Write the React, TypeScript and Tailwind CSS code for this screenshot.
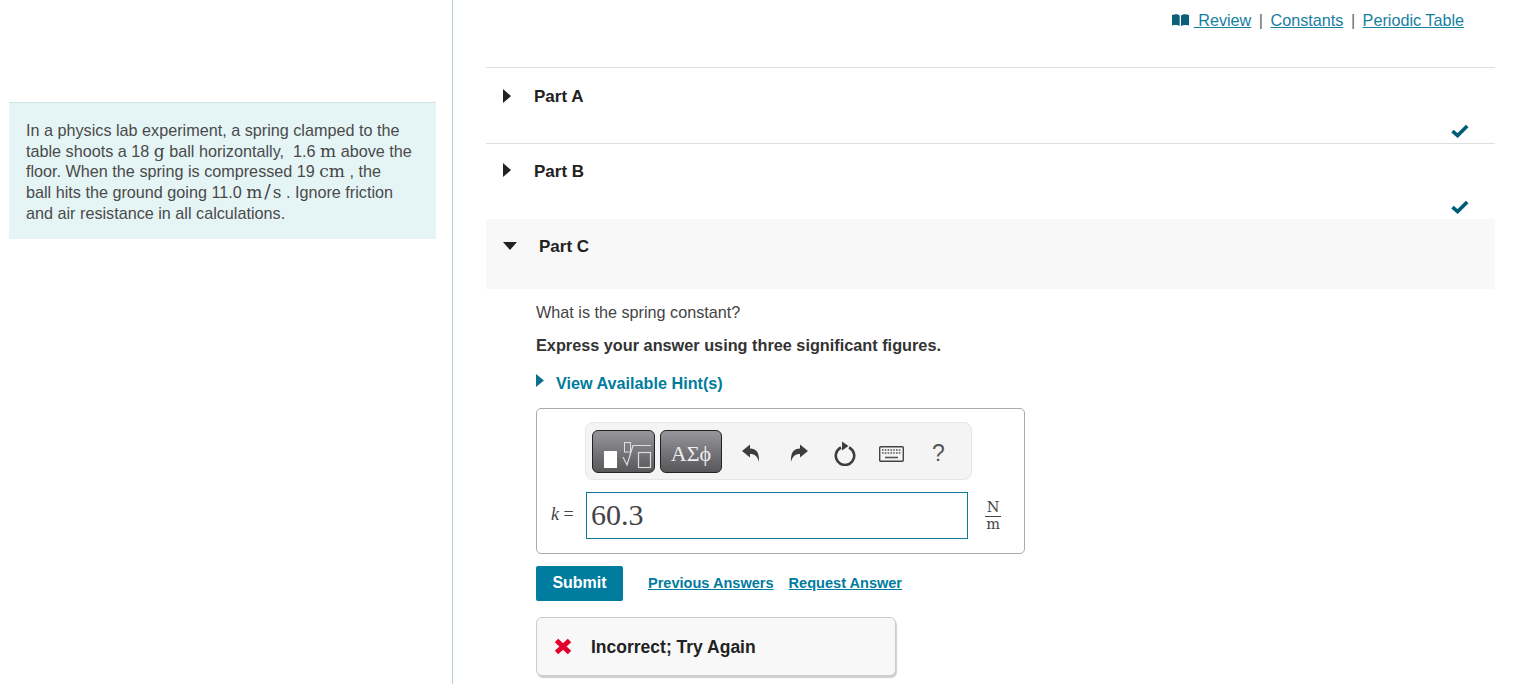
import React from "react";

const sans = "font-['Liberation_Sans',Arial,sans-serif]";
const serif = "font-['Liberation_Serif','Times_New_Roman',serif]";
const dejaSerif = "font-['DejaVu_Serif',serif]";

function M({ children }: { children: React.ReactNode }) {
  return <span className={`${dejaSerif} text-[17px] leading-[16px] text-[#444]`}>{children}</span>;
}

function Check() {
  return (
    <svg width="18" height="14" viewBox="0 0 18 14" className="block">
      <path d="M1.5 7.2 L6.6 11.6 L16.2 2" fill="none" stroke="#005c75" strokeWidth="3.6" />
    </svg>
  );
}

function RightTri({ color = "#222", h = 14, className = "" }: { color?: string; h?: number; className?: string }) {
  return (
    <svg width="8" height={h} viewBox={`0 0 8 ${h}`} className={`block ${className}`}>
      <path d={`M0 0 L8 ${h / 2} L0 ${h} Z`} fill={color} />
    </svg>
  );
}

function PartRow({ label, triClass, labelClass }: { label: string; triClass: string; labelClass: string }) {
  return (
    <div className="h-[76px] border-t border-[#dedede] flex flex-col">
      <div className="flex items-start pl-[17px] h-[49px]">
        <RightTri className={triClass} />
        <span className={`ml-[23px] text-[17px] leading-[20px] font-bold text-[#222] ${labelClass}`}>{label}</span>
      </div>
      <div className="flex justify-end pr-[26px] mt-[7px]">
        <Check />
      </div>
    </div>
  );
}

export default function App() {
  return (
    <div className={`${sans} flex h-[684px] overflow-hidden bg-white text-[#444]`}>
      <aside className="w-[453px] shrink-0 border-r border-[#b6d0e2] pt-[102px] pl-[9px] pr-[16px]">
        <div className="h-[137px] bg-[#e5f5f6] border-t border-[#d3e3e3] pl-[17px] pt-[17px] pr-[10px] text-[16.2px] leading-[20.6px] text-[#4a4a4a]">
          <div className="h-[20.6px] whitespace-nowrap">In a physics lab experiment, a spring clamped to the</div>
          <div className="h-[20.6px] whitespace-nowrap">table shoots a 18 <M>g</M> ball horizontally,&nbsp; 1.6 <M>m</M> above the</div>
          <div className="h-[20.6px] whitespace-nowrap">floor. When the spring is compressed 19 <M>cm</M> , the</div>
          <div className="h-[20.6px] whitespace-nowrap">ball hits the ground going 11.0 <M>m<span className="px-[2px] text-[19px]">/</span>s</M> . Ignore friction</div>
          <div className="h-[20.6px] whitespace-nowrap mt-[1px]">and air resistance in all calculations.</div>
        </div>
      </aside>

      <main className="flex-1 pl-[33px] pr-[30px]">
        <div className="h-[67px] flex justify-end pt-[11px] pr-[31px] text-[16.2px] leading-[18px] text-[#666]">
          <svg width="17" height="12" viewBox="0 0 17 12" className="mt-[3px] mr-[5px]">
            <path d="M0 1 C3 0 6 0 7.7 1.5 V12 C6 10.8 3 10.8 0 11.5 Z M9 1.5 C11 0 14 0 17 1 V11.5 C14 10.8 11 10.8 9 12 Z" fill="#0b5f78" />
          </svg>
          <a className="underline text-[#16809f] whitespace-pre"> Review</a>
          <span className="mx-[7.5px]">|</span>
          <a className="underline text-[#16809f]">Constants</a>
          <span className="mx-[7.5px]">|</span>
          <a className="underline text-[#16809f]">Periodic Table</a>
        </div>

        <PartRow label="Part A" triClass="mt-[21px]" labelClass="mt-[19px]" />
        <PartRow label="Part B" triClass="mt-[19px]" labelClass="mt-[18px]" />

        <div className="h-[70px] bg-[#f8f8f8] flex items-start pl-[17px] pt-[18px]">
          <svg width="14" height="8" viewBox="0 0 14 8" className="mt-[5px]">
            <path d="M0 0 H14 L7 8 Z" fill="#222" />
          </svg>
          <span className="ml-[22px] text-[17px] leading-[20px] font-bold text-[#222]">Part C</span>
        </div>

        <div className="pl-[50px]">
          <p className="mt-[14px] text-[16.2px] leading-[19px] text-[#444]">What is the spring constant?</p>
          <p className="mt-[14px] text-[16.28px] leading-[19px] font-bold text-[#333]">Express your answer using three significant figures.</p>
          <div className="mt-[18px] flex items-start h-[20px]">
            <RightTri color="#0b6f8f" h={13} className="mt-[1px]" />
            <span className="ml-[12px] text-[16.2px] leading-[20px] font-bold text-[#007c9e]">View Available Hint(s)</span>
          </div>

          <div className="mt-[15px] w-[489px] h-[146px] border border-[#aaaaaa] rounded-[5px] pt-[13px] pl-[48px]">
            <div className="w-[387px] h-[58px] bg-[#f4f4f4] border border-[#e6e6e6] rounded-[8px] flex items-center pl-[6px]">
              <div className="w-[63px] h-[43px] rounded-[6px] border border-[#222] bg-linear-to-b from-[#97969c] to-[#58585a]">
                <svg width="61" height="41" viewBox="0 0 61 41" className="block">
                  <rect x="11" y="20" width="13" height="17" fill="#fff" />
                  <rect x="31.5" y="11.5" width="6" height="9.5" fill="none" stroke="#ddd" strokeWidth="1" />
                  <path d="M30 26 L34 34 L40 14.5 H58" fill="none" stroke="#ddd" strokeWidth="1.2" />
                  <rect x="45.5" y="21.5" width="12" height="15" fill="none" stroke="#ddd" strokeWidth="1.2" />
                </svg>
              </div>
              <div className={`${serif} ml-[5px] w-[62px] h-[43px] rounded-[6px] border border-[#222] bg-linear-to-b from-[#97969c] to-[#58585a] flex items-center justify-center text-[22px] text-[#eee]`}>
                <span className="mt-[4px]">ΑΣϕ</span>
              </div>
              <div className="ml-[19px] mt-[3px] flex items-center">
                <svg width="20" height="20" viewBox="0 0 20 20">
                  <path d="M1 8 L9 1.5 V5.5 C15 5.5 18.5 9 18 19 C16.5 13.5 14 11 9 11 V14.5 Z" fill="#3d3d3d" />
                </svg>
                <svg width="20" height="20" viewBox="0 0 20 20" className="ml-[28px]">
                  <path d="M19 8 L11 1.5 V5.5 C5 5.5 1.5 9 2 19 C3.5 13.5 6 11 11 11 V14.5 Z" fill="#3d3d3d" />
                </svg>
                <svg width="24" height="26" viewBox="0 0 24 26" className="ml-[24px]">
                  <path d="M8 7.5 A9.2 9.2 0 1 0 16 7.5" fill="none" stroke="#3d3d3d" strokeWidth="2.6" />
                  <path d="M9 1.5 L15.5 6 L9 10.5 Z" fill="#3d3d3d" />
                </svg>
                <svg width="25" height="16" viewBox="0 0 25 16" className="ml-[22px] mt-[3px]">
                  <rect x="0.7" y="0.7" width="23.6" height="14.6" rx="1" fill="#f4f4f4" stroke="#444" strokeWidth="1.4" />
                  <path d="M3 4 H22 M3 7 H22" stroke="#555" strokeWidth="1.4" strokeDasharray="1.6 1.2" />
                  <path d="M6 11.5 H19" stroke="#555" strokeWidth="1.6" />
                </svg>
                <span className="ml-[28px] text-[23px] leading-[24px] text-[#555]">?</span>
              </div>
            </div>

            <div className="relative mt-[12px] ml-[1px] flex">
              <span className={`${serif} absolute left-[-35px] top-[12px] text-[18px] leading-[20px] text-[#444] whitespace-pre`}>
                <i>k</i> =
              </span>
              <div className={`${serif} w-[382px] h-[47px] border border-[#0b7a9b] pl-[4px] text-[30px] leading-[44px] text-[#444]`}>60.3</div>
              <div className={`${dejaSerif} ml-[17px] mt-[7px] w-[16px] flex flex-col items-center text-[14.5px] text-[#444]`}>
                <span className="border-b border-[#444] w-full text-center leading-[17px]">N</span>
                <span className="leading-[15px]">m</span>
              </div>
            </div>
          </div>

          <div className="mt-[12px] flex items-center h-[35px]">
            <div className="w-[87px] h-[35px] rounded-[2px] bg-[#007c9e] text-white font-bold text-[16px] flex items-center justify-center pb-[2px]">Submit</div>
            <a className="ml-[25px] underline font-bold text-[14.55px] text-[#007c9e]">Previous Answers</a>
            <a className="ml-[15px] underline font-bold text-[14.55px] text-[#007c9e]">Request Answer</a>
          </div>

          <div className="mt-[16px] w-[360px] h-[59px] rounded-[6px] border border-[#cccccc] bg-[#f8f8f8] shadow-[1px_2px_1px_#cfcfcf] flex items-center pl-[17px]">
            <svg width="18" height="17" viewBox="0 0 18 17">
              <path d="M2.5 2.5 L15.5 14.5 M15.5 2.5 L2.5 14.5" stroke="#e4002b" strokeWidth="5" />
            </svg>
            <span className="ml-[19px] mt-[1px] text-[17.5px] font-bold text-[#222]">Incorrect; Try Again</span>
          </div>
        </div>
      </main>
    </div>
  );
}
